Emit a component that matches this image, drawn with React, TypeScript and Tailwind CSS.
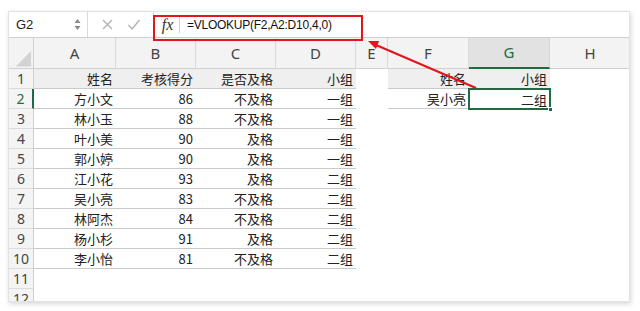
import React from "react";

const cols = ["A", "B", "C", "D", "E", "F", "G", "H"];

const table = [
  ["姓名", "考核得分", "是否及格", "小组"],
  ["方小文", "86", "不及格", "一组"],
  ["林小玉", "88", "不及格", "一组"],
  ["叶小美", "90", "及格", "一组"],
  ["郭小婷", "90", "及格", "一组"],
  ["江小花", "93", "及格", "二组"],
  ["吴小亮", "83", "不及格", "二组"],
  ["林阿杰", "84", "不及格", "二组"],
  ["杨小杉", "91", "及格", "二组"],
  ["李小怡", "81", "不及格", "二组"],
];

const lookup: Record<number, [string, string]> = {
  1: ["姓名", "小组"],
  2: ["吴小亮", "二组"],
};

const cellFont = { fontFamily: '"Noto Sans CJK SC", "Liberation Sans", sans-serif' };

function Cell({
  text,
  head,
  line,
}: {
  text?: string;
  head?: boolean;
  line?: boolean;
}) {
  return (
    <div
      className={`h-[20px] flex items-center justify-end pr-[3px] text-[13px] text-[#222] leading-none ${
        head ? "bg-[#efefef]" : "bg-white"
      } ${line ? "border-b border-[#c9c9c9]" : ""}`}
    >
      {text}
    </div>
  );
}

export default function App() {
  const rows = Array.from({ length: 12 }, (_, i) => i + 1);

  return (
    <div className="relative w-[640px] h-[311px] bg-white overflow-hidden pt-[11px] pl-[8px]">
      <div className="w-[622px] h-[291px] bg-white flex flex-col overflow-hidden border border-[#e2e2e2] shadow-[1px_2px_5px_rgba(0,0,0,0.16)]">
        {/* Formula bar */}
        <div className="h-[26px] flex items-stretch border-b border-[#cfcfcf] shrink-0">
          <div
            className="w-[79px] flex items-center justify-between pl-[7px] pr-[6px] border-r border-[#d8d8d8] text-[13px] text-[#222]"
            style={{ fontFamily: '"Liberation Sans", sans-serif' }}
          >
            <span>G2</span>
            <svg width="7" height="13" viewBox="0 0 7 13">
              <polygon points="3.5,1 6.5,5 0.5,5" fill="#8a8a8a" />
              <polygon points="3.5,12 6.5,8 0.5,8" fill="#8a8a8a" />
            </svg>
          </div>
          <div className="w-[66px] flex items-center justify-center gap-[13px] border-r border-[#d8d8d8]">
            <svg width="13" height="13" viewBox="0 0 13 13">
              <path d="M2 2 L11 11 M11 2 L2 11" stroke="#b0b0b0" strokeWidth="1.3" fill="none" />
            </svg>
            <svg width="14" height="13" viewBox="0 0 14 13">
              <path d="M1.5 7 L5 11 L12.5 2" stroke="#b0b0b0" strokeWidth="1.3" fill="none" />
            </svg>
          </div>
          <div className="flex items-center">
            <span
              className="w-[25px] text-center text-[16px] italic text-[#333] leading-none pl-[2px]"
              style={{ fontFamily: '"Liberation Serif", serif' }}
            >
              fx
            </span>
            <div className="w-px h-[16px] bg-[#d0d0d0]" />
            <span
              className="pl-[7px] text-[12px] tracking-[-0.25px] text-[#111]"
              style={{ fontFamily: '"Liberation Sans", sans-serif' }}
            >
              =VLOOKUP(F2,A2:D10,4,0)
            </span>
          </div>
        </div>

        {/* Sheet */}
        <div className="grid grid-cols-[25px_82px_80px_80px_80px_32px_81px_81px_81px] grid-rows-[31px] auto-rows-[20px]">
          {/* column header */}
          <div className="bg-[#f3f3f3] border-b border-r border-[#d0d0d0] flex items-end justify-end">
            <svg width="25" height="30" viewBox="0 0 25 30">
              <polygon points="7,29 23,13 23,29" fill="#d3d3d3" />
            </svg>
          </div>
          {cols.map((c) =>
            c === "G" ? (
              <div
                key={c}
                className="bg-[#e2e2e2] border-b-2 border-b-[#1e6c41] border-r border-r-[#d6d6d6] flex items-center justify-center text-[15px] text-[#1e6c41]"
                style={{ fontFamily: '"Noto Sans", sans-serif' }}
              >
                {c}
              </div>
            ) : (
              <div
                key={c}
                className="bg-[#f3f3f3] border-b border-b-[#cfcfcf] border-r border-r-[#dadada] flex items-center justify-center text-[15px] text-[#444]"
                style={{ fontFamily: '"Noto Sans", sans-serif' }}
              >
                {c}
              </div>
            )
          )}

          {rows.map((r) => {
            const data = table[r - 1];
            const lk = lookup[r];
            return (
              <React.Fragment key={r}>
                <div
                  className={`h-[20px] flex items-center justify-center text-[14px] leading-none bg-[#f4f4f4] border-b border-b-[#dcdcdc] ${
                    r === 2
                      ? "border-r-2 border-r-[#1e6c41] text-[#1e6c41] bg-[#e6e6e6]"
                      : "border-r border-r-[#cfcfcf] text-[#444]"
                  }`}
                  style={{ fontFamily: '"Noto Sans", sans-serif' }}
                >
                  {r}
                </div>
                {[0, 1, 2, 3].map((ci) => (
                  <div key={ci} style={cellFont}>
                    <Cell text={data?.[ci]} head={r === 1} line={!!data} />
                  </div>
                ))}
                <div className="h-[20px] bg-white" />
                <div style={cellFont}>
                  <Cell text={lk?.[0]} head={r === 1} line={!!lk} />
                </div>
                {r === 2 ? (
                  <div className="relative h-[20px]" style={cellFont}>
                    <Cell text={lk?.[1]} />
                    <div className="absolute -inset-[1px] border-2 border-[#1e6c41]" />
                    <div className="absolute -right-[3px] -bottom-[3px] w-[5px] h-[5px] bg-[#1e6c41] border border-white" />
                  </div>
                ) : (
                  <div style={cellFont}>
                    <Cell text={lk?.[1]} head={r === 1} line={!!lk} />
                  </div>
                )}
                <div className="h-[20px] bg-white" />
              </React.Fragment>
            );
          })}
        </div>
      </div>

      {/* annotation */}
      <div className="absolute left-[153px] top-[15px] w-[210px] h-[26px] border-2 border-[#e3141b] pointer-events-none" />
      <svg className="absolute left-0 top-0 pointer-events-none" width="640" height="311" viewBox="0 0 640 311">
        <line x1="476" y1="88" x2="376" y2="45" stroke="#e3141b" strokeWidth="2" />
        <polygon points="368,41 379,41 376,49" fill="#e3141b" />
      </svg>
    </div>
  );
}
